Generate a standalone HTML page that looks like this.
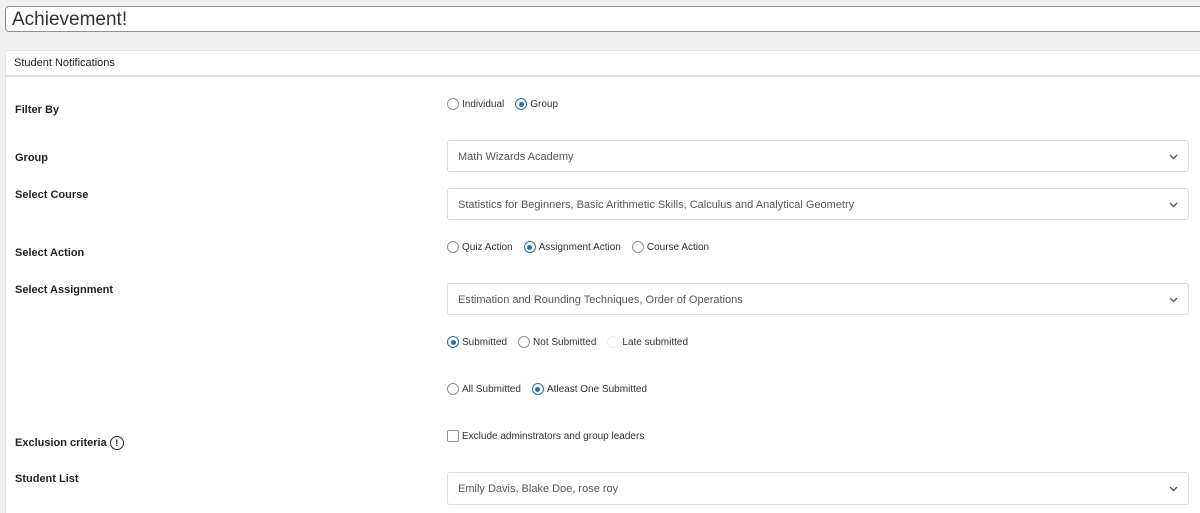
<!DOCTYPE html>
<html><head><style>
html,body{margin:0;width:1200px;height:513px;overflow:hidden}
body{background:#f0f0f1;font-family:"Liberation Sans",sans-serif;position:relative}
.a{position:absolute}
.title{left:5px;top:6px;width:1200px;height:26px;border:1px solid #8c8f94;border-radius:4px;background:#fff;font-size:19px;color:#2c3338;line-height:26px;padding-left:6px;box-sizing:border-box}
.panel{left:5px;top:50px;width:1200px;height:470px;background:#fff;border:1px solid #e2e4e7}
.hdr{left:5px;top:50px;width:1200px;height:27px;border-bottom:2px solid #dcdcde;font-size:11px;color:#1d2327;line-height:26px;padding-left:9px;box-sizing:border-box}
.lbl{left:15px;font-size:11px;font-weight:bold;color:#1d2327}
.sel{left:447px;width:742px;height:32px;border:1px solid #dcdcde;border-radius:3px;box-sizing:border-box;font-size:11px;color:#50575e;line-height:32px;padding-left:10px}
.sel svg{position:absolute;right:10px;top:13px}
.opt{font-size:10px;color:#2c3338;display:flex;align-items:center}
.r{width:12px;height:12px;border:1px solid #8c8f94;border-radius:50%;box-sizing:border-box;display:inline-block;margin-right:3px;position:relative}
.r.on{border-color:#2271b1}
.r.on::after{content:"";position:absolute;left:2.5px;top:2.5px;width:5px;height:5px;border-radius:50%;background:#2271b1}
.r.dis{border-color:#eee}
.g{margin-right:11px}
</style></head><body>
<div class="a title">Achievement!</div>
<div class="a panel"></div>
<div class="a hdr">Student Notifications</div>

<div class="a lbl" style="top:104px">Filter By</div>
<div class="a lbl" style="top:152px">Group</div>
<div class="a lbl" style="top:189px">Select Course</div>
<div class="a lbl" style="top:247px">Select Action</div>
<div class="a lbl" style="top:284px">Select Assignment</div>
<div class="a lbl" style="top:436px;display:flex;align-items:center">Exclusion criteria<span style="display:inline-block;width:12px;height:12px;border:1.3px solid #1d2327;border-radius:50%;margin-left:3px;font-size:9px;text-align:center;line-height:12px">!</span></div>
<div class="a lbl" style="top:473px">Student List</div>

<div class="a opt" style="left:447px;top:98px"><span class="r"></span><span class="g">Individual</span><span class="r on"></span>Group</div>
<div class="a sel" style="top:140px">Math Wizards Academy<svg width="9" height="6"><path d="M1 1L4.5 4.5L8 1" stroke="#555" stroke-width="1.4" fill="none"/></svg></div>
<div class="a sel" style="top:188px">Statistics for Beginners, Basic Arithmetic Skills, Calculus and Analytical Geometry<svg width="9" height="6"><path d="M1 1L4.5 4.5L8 1" stroke="#555" stroke-width="1.4" fill="none"/></svg></div>
<div class="a opt" style="left:447px;top:241px"><span class="r"></span><span class="g">Quiz Action</span><span class="r on"></span><span class="g">Assignment Action</span><span class="r"></span>Course Action</div>
<div class="a sel" style="top:283px">Estimation and Rounding Techniques, Order of Operations<svg width="9" height="6"><path d="M1 1L4.5 4.5L8 1" stroke="#555" stroke-width="1.4" fill="none"/></svg></div>
<div class="a opt" style="left:447px;top:336px"><span class="r on"></span><span class="g">Submitted</span><span class="r"></span><span class="g">Not Submitted</span><span class="r dis"></span>Late submitted</div>
<div class="a opt" style="left:447px;top:383px"><span class="r"></span><span class="g">All Submitted</span><span class="r on"></span>Atleast One Submitted</div>
<div class="a opt" style="left:447px;top:430px"><span class="r" style="border-radius:2px"></span>Exclude adminstrators and group leaders</div>
<div class="a sel" style="top:472px;height:33px">Emily Davis, Blake Doe, rose roy<svg width="9" height="6"><path d="M1 1L4.5 4.5L8 1" stroke="#555" stroke-width="1.4" fill="none"/></svg></div>
</body></html>
